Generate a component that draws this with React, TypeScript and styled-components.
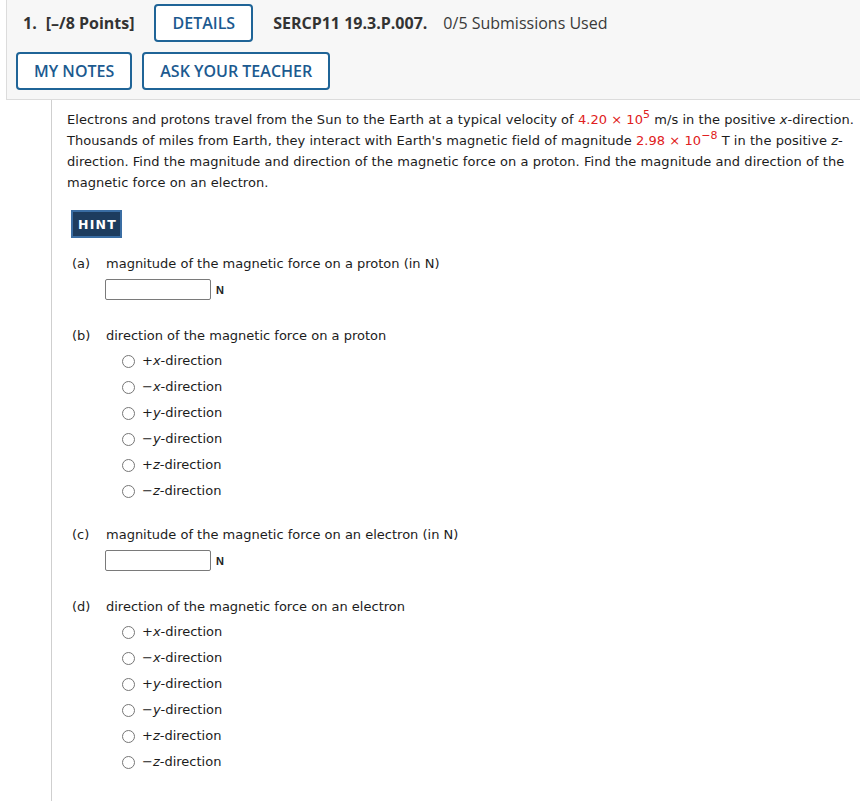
import React from "react";
import styled, { createGlobalStyle } from "styled-components";

const Global = createGlobalStyle`
  html, body { margin: 0; padding: 0; background: #fff; }
  body { font-family: "DejaVu Sans", Verdana, sans-serif; color: #1c1c1c; }
`;

const Header = styled.div`
  margin-left: 6px;
  background: #f7f7f7;
  border-left: 1px solid #dcdcdc;
  border-bottom: 1px solid #dcdcdc;
  padding: 4px 0 9px 9px;
  font-family: "Open Sans", sans-serif;
  color: #333;
`;

const HeaderRow = styled.div<{ $top?: boolean }>`
  display: flex;
  align-items: center;
  gap: 10px;
  margin-top: ${(p) => (p.$top ? "0" : "10px")};
`;

const Num = styled.span`
  font-weight: 700;
  font-size: 16px;
  margin-left: 7px;
  margin-right: -1px;
`;

const Points = styled.span`
  font-weight: 700;
  font-size: 16px;
  margin-right: 10px;
`;

const Code = styled.span`
  font-weight: 700;
  font-size: 16px;
  margin-left: 10px;
  margin-right: 6px;
`;

const Subs = styled.span`
  font-size: 16px;
  font-weight: 400;
  color: #3a3a3a;
`;

const OutlineButton = styled.button`
  font-family: "Open Sans", sans-serif;
  font-size: 16px;
  font-weight: 600;
  color: #1c5a90;
  background: #fff;
  border: 2px solid #1f6497;
  border-radius: 4px;
  height: 38px;
  padding: 0 16px;
  cursor: pointer;
`;

const Body = styled.div`
  margin-left: 51px;
  border-left: 1px solid #cfcfcf;
  padding: 9px 0 40px 15px;
  font-size: 13px;
  line-height: 20px;
`;

const Para = styled.p`
  margin: 0;
  line-height: 21px;
  letter-spacing: 0.05px;
`;

const Red = styled.span`
  color: #e02020;
`;

const Sup = styled.sup`
  font-size: 11px;
  line-height: 0;
  vertical-align: 6px;
`;

const Hint = styled.button`
  display: block;
  margin: 17px 0 0 4px;
  background: #1d3c5e;
  border: 2px solid #3a6da3;
  color: #fff;
  font-family: "DejaVu Sans", Verdana, sans-serif;
  font-weight: 700;
  font-size: 12.5px;
  letter-spacing: 1.2px;
  height: 28px;
  padding: 0 3px 0 5px;
`;

const Part = styled.div<{ $gap: number }>`
  margin-top: ${(p) => p.$gap}px;
`;

const PartLabel = styled.div`
  display: flex;
  padding-left: 5px;
`;

const Letter = styled.span`
  width: 34px;
`;

const AnswerRow = styled.div`
  display: flex;
  align-items: center;
  margin: 5px 0 0 38px;
`;

const Input = styled.input`
  width: 106px;
  height: 21px;
  box-sizing: border-box;
  border: 1px solid #7a7a7a;
  border-radius: 2px;
  margin: 0;
`;

const Unit = styled.span`
  font-family: "Liberation Sans", Arial, sans-serif;
  font-weight: 700;
  font-size: 11px;
  margin-left: 5px;
  color: #222;
`;

const Options = styled.div`
  margin: 2px 0 0 55px;
  display: flex;
  flex-direction: column;
`;

const Option = styled.label`
  display: flex;
  align-items: center;
  height: 26px;
`;

const Radio = styled.input`
  width: 13px;
  height: 13px;
  margin: 0 7px 0 0;
`;

const directions = [
  ["+", "x"],
  ["\u2212", "x"],
  ["+", "y"],
  ["\u2212", "y"],
  ["+", "z"],
  ["\u2212", "z"],
];

function RadioGroup({ name }: { name: string }) {
  return (
    <Options>
      {directions.map(([s, a], i) => (
        <Option key={i}>
          <Radio type="radio" name={name} />
          <span>
            {s}
            <i>{a}</i>-direction
          </span>
        </Option>
      ))}
    </Options>
  );
}

export default function App() {
  return (
    <>
      <Global />
      <Header>
        <HeaderRow $top>
          <Num>1.</Num>
          <Points>[–/8 Points]</Points>
          <OutlineButton>DETAILS</OutlineButton>
          <Code>SERCP11 19.3.P.007.</Code>
          <Subs>0/5 Submissions Used</Subs>
        </HeaderRow>
        <HeaderRow>
          <OutlineButton>MY NOTES</OutlineButton>
          <OutlineButton>ASK YOUR TEACHER</OutlineButton>
        </HeaderRow>
      </Header>
      <Body>
        <Para>
          Electrons and protons travel from the Sun to the Earth at a typical velocity of{" "}
          <Red>
            4.20 × 10<Sup>5</Sup>
          </Red>{" "}
          m/s in the positive <i>x</i>-direction. Thousands of miles from Earth, they interact with
          Earth's magnetic field of magnitude{" "}
          <Red>
            2.98 × 10<Sup>−8</Sup>
          </Red>{" "}
          T in the positive <i>z</i>-direction. Find the magnitude and direction of the magnetic force
          on a proton. Find the magnitude and direction of the magnetic force on an electron.
        </Para>
        <Hint>HINT</Hint>
        <Part $gap={16}>
          <PartLabel>
            <Letter>(a)</Letter>
            <span>magnitude of the magnetic force on a proton (in N)</span>
          </PartLabel>
          <AnswerRow>
            <Input type="text" />
            <Unit>N</Unit>
          </AnswerRow>
        </Part>
        <Part $gap={26}>
          <PartLabel>
            <Letter>(b)</Letter>
            <span>direction of the magnetic force on a proton</span>
          </PartLabel>
          <RadioGroup name="b" />
        </Part>
        <Part $gap={21}>
          <PartLabel>
            <Letter>(c)</Letter>
            <span>magnitude of the magnetic force on an electron (in N)</span>
          </PartLabel>
          <AnswerRow>
            <Input type="text" />
            <Unit>N</Unit>
          </AnswerRow>
        </Part>
        <Part $gap={26}>
          <PartLabel>
            <Letter>(d)</Letter>
            <span>direction of the magnetic force on an electron</span>
          </PartLabel>
          <RadioGroup name="d" />
        </Part>
      </Body>
    </>
  );
}
